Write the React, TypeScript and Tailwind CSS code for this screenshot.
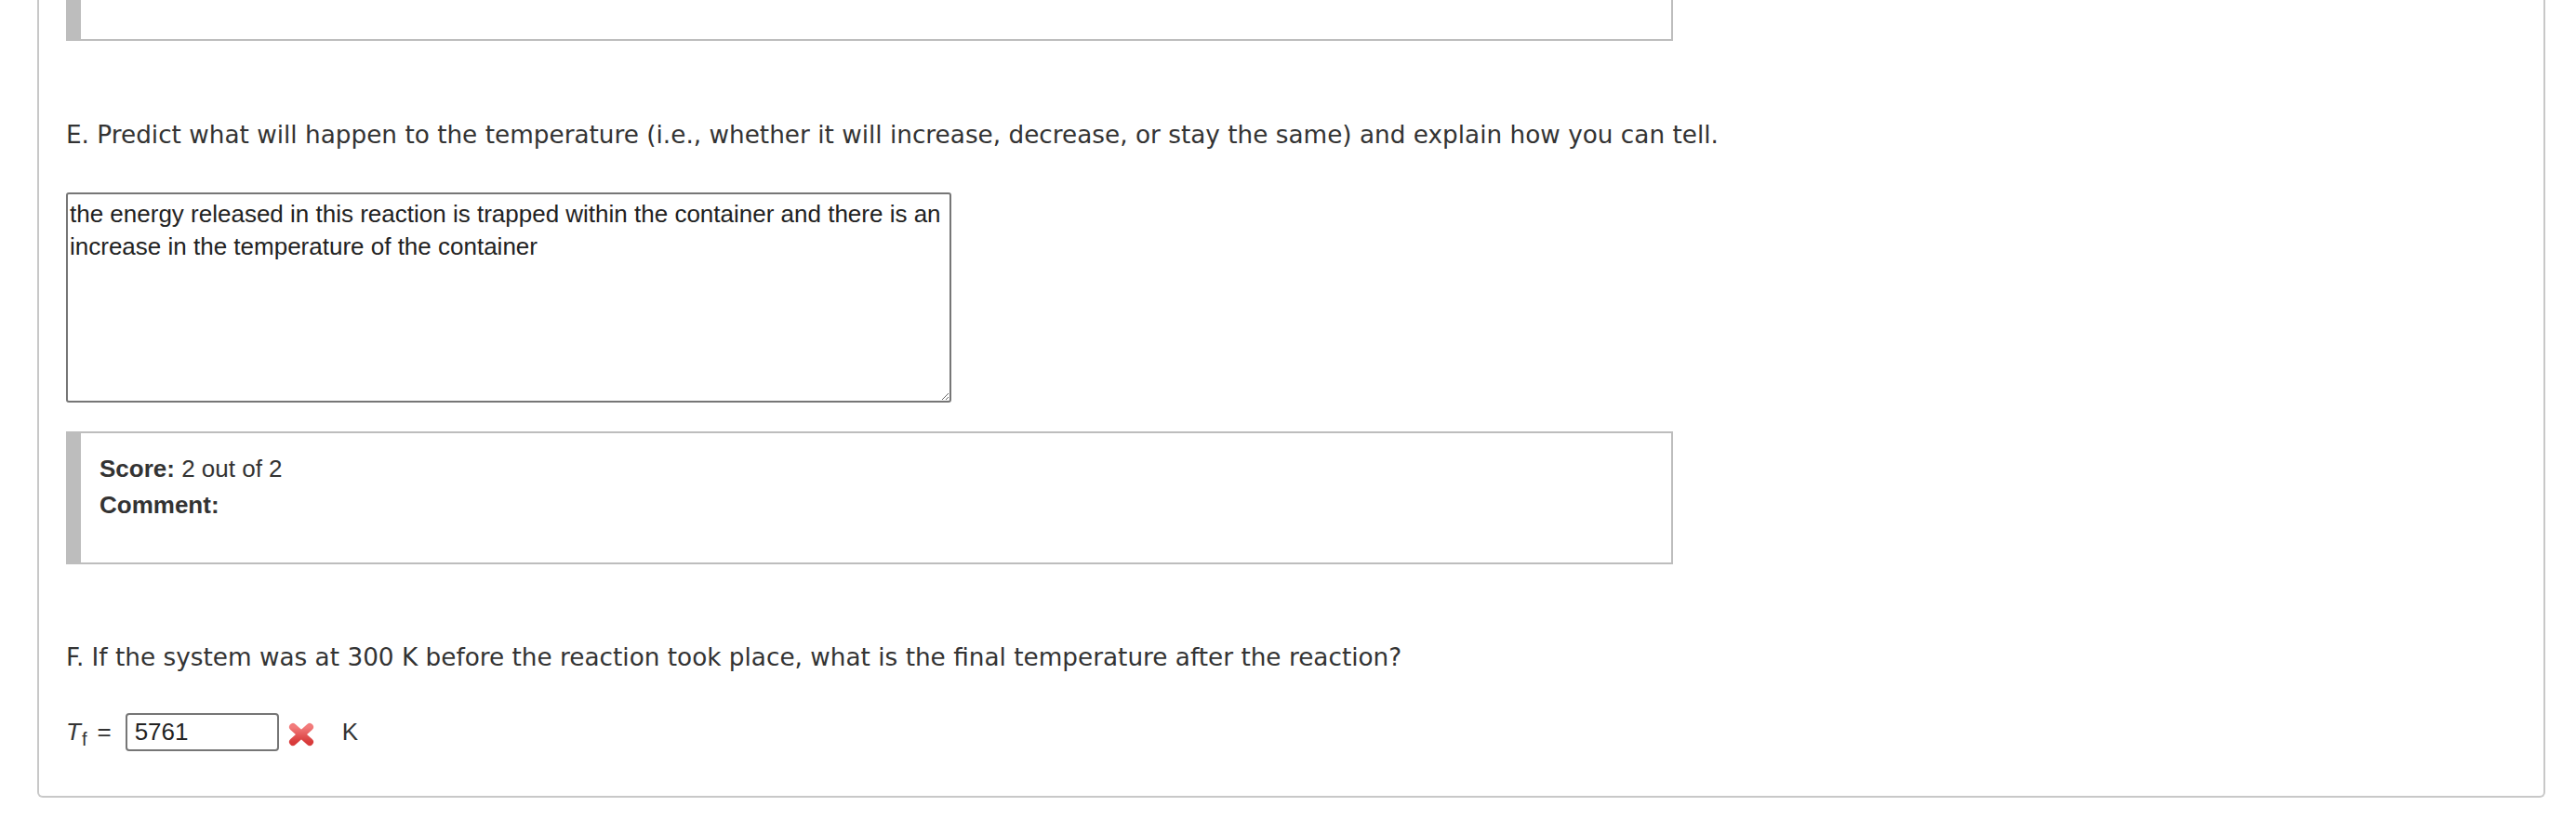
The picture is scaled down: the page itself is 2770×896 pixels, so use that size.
const answerE =
  "the energy released in this reaction is trapped within the container and there is an increase in the temperature of the container";

function WrongMark() {
  return (
    <svg width="28" height="26" viewBox="0 0 28 26" className="shrink-0">
      <defs>
        <linearGradient id="xred" x1="0" y1="0" x2="0" y2="1">
          <stop offset="0" stopColor="#f27b7b" />
          <stop offset="1" stopColor="#d83b3b" />
        </linearGradient>
      </defs>
      <g stroke="url(#xred)" strokeWidth="8" strokeLinecap="round">
        <line x1="5" y1="5" x2="23" y2="21" />
        <line x1="23" y1="5" x2="5" y2="21" />
      </g>
    </svg>
  );
}

export default function App() {
  return (
    <div className="min-h-screen bg-white">
      <div className="ml-[40px] mr-[33px] border-2 border-t-0 border-[#c8c8c8] rounded-b-[6px] pl-[29px] pb-[48px]">
        {/* previous score panel, cut off at the top */}
        <div className="w-[1728px] h-[44px] border-b-2 border-r-2 border-l-[16px] border-[#bdbdbd] bg-white" />

        {/* Part E */}
        <p className="mt-[83px] font-['DejaVu_Sans',Verdana,sans-serif] text-[26.3px] leading-[36px] text-[#333]">
          E. Predict what will happen to the temperature (i.e., whether it will increase, decrease, or stay the same) and explain how you can tell.
        </p>

        <textarea
          readOnly
          defaultValue={answerE}
          className="block mt-[44px] w-[952px] h-[226px] border-2 border-[#767676] rounded-[3px] px-[2px] pt-[4px] pb-[2px] font-['Liberation_Sans',Arial,sans-serif] text-[26px] leading-[35px] text-[#222] outline-none"
        />

        <div className="mt-[31px] w-[1728px] h-[143px] border-2 border-l-[16px] border-[#bdbdbd] pl-[20px] pt-[19px] font-['Liberation_Sans',Arial,sans-serif] text-[26px] leading-[39px] text-[#333]">
          <div>
            <span className="font-bold">Score:</span> 2 out of 2
          </div>
          <div className="font-bold">Comment:</div>
        </div>

        {/* Part F */}
        <p className="mt-[82px] font-['DejaVu_Sans',Verdana,sans-serif] text-[26.3px] leading-[36px] text-[#333]">
          F. If the system was at 300 K before the reaction took place, what is the final temperature after the reaction?
        </p>

        <div className="mt-[42px] flex items-center h-[41px] font-['Liberation_Sans',Arial,sans-serif] text-[26px] text-[#333]">
          <span className="italic">T</span>
          <span className="text-[20px] relative top-[7px] ml-[1px]">f</span>
          <span className="ml-[11px]">=</span>
          <input
            readOnly
            value="5761"
            className="ml-[15px] w-[165px] h-[41px] border-2 border-[#767676] rounded-[4px] px-[8px] text-[26px] text-[#222] outline-none"
          />
          <span className="ml-[10px] mt-[4px] flex">
            <WrongMark />
          </span>
          <span className="ml-[30px]">K</span>
        </div>
      </div>
    </div>
  );
}
